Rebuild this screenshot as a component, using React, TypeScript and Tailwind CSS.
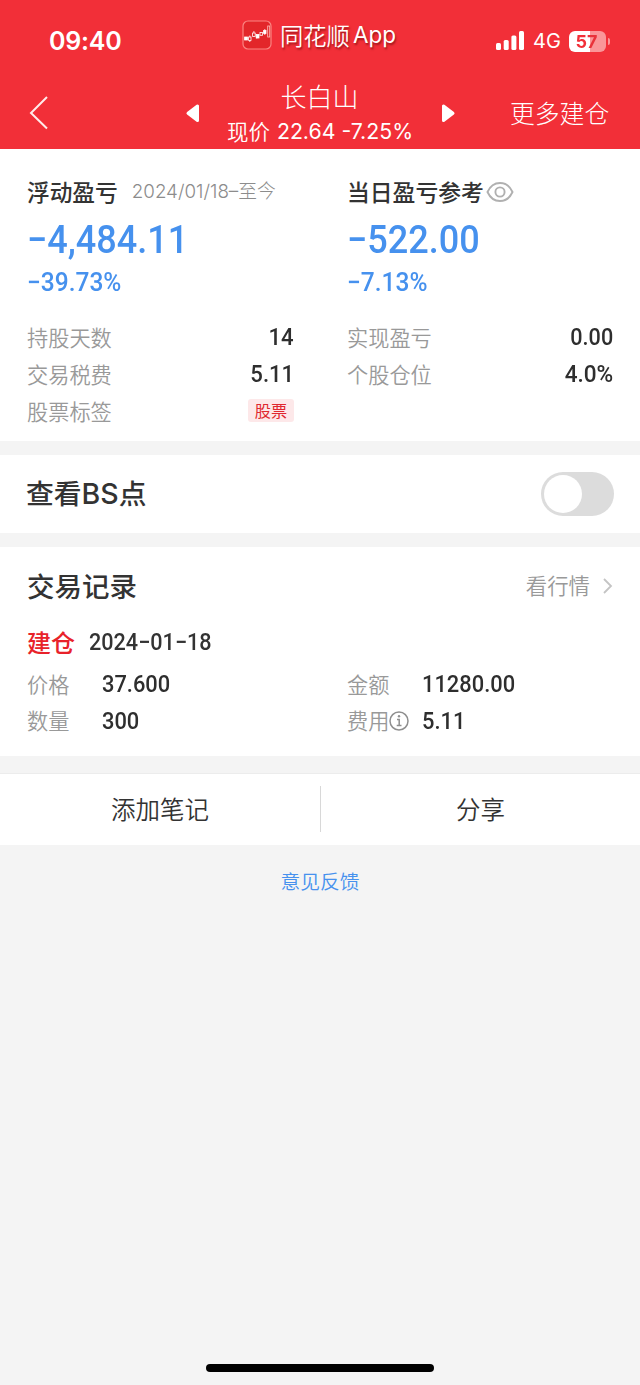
import React from "react";

const cjk = "font-['Noto_Sans_CJK_SC',sans-serif]";
const num = "font-[Roboto,'Noto_Sans_CJK_SC',sans-serif]";

function Num({ children, className = "" }: { children: React.ReactNode; className?: string }) {
  return <span className={`inline-block whitespace-nowrap font-medium ${num} ${className}`}>{children}</span>;
}

function StatusBar() {
  return (
    <div className="flex h-[74px] items-start text-white">
      <div className="w-[242px] pl-[49px] pt-[25px] font-['Inter',sans-serif] text-[25px] font-semibold leading-8 tracking-[-0.2px]">09:40</div>
      <div className="flex w-[254px] items-center gap-2 pt-[19px]">
        <svg width="30" height="30" viewBox="0 0 30 30" className="shrink-0">
          <rect x="1" y="1" width="28" height="28" rx="5" fill="#e3262a" stroke="#fa8582" strokeWidth="1.2" />
          <g fill="#fff" stroke="#fff" strokeWidth="0.8">
            <rect x="2.600" y="17" width="2.800" height="3" />
            <rect x="6.600" y="17" width="2.400" height="3.500" fill="none" />
            <path d="M7.800 15.500v1.500M7.800 20.500v1.500" />
            <rect x="10.600" y="13" width="2.600" height="3.500" fill="none" />
            <path d="M11.900 11v2M14.800 15.500v3" />
            <rect x="14.200" y="14.500" width="2.800" height="3.500" />
            <rect x="18" y="12.500" width="2.400" height="2.800" fill="none" />
            <rect x="21.600" y="10.500" width="2.400" height="3" />
            <path d="M22.800 9v6" />
            <rect x="25.700" y="6" width="2" height="11" fill="none" stroke="#ffc0bc" />
          </g>
        </svg>
        <div className="flex items-center gap-[3px] whitespace-nowrap leading-[30px] [text-shadow:1px_2px_2px_rgba(90,0,0,0.55)]">
          <span className={`${cjk} text-[23.3px] font-[350]`}>同花顺</span>
          <span className="pt-px font-['Inter',sans-serif] text-[22.500px]">App</span>
        </div>
      </div>
      <div className="flex items-center pt-[26px]">
        <svg width="28" height="30" viewBox="0 0 28 30" fill="#fff">
          <rect x="0" y="17" width="5" height="7" rx="1.5" />
          <rect x="7.7" y="14" width="5" height="10" rx="1.5" />
          <rect x="15.4" y="9.5" width="5" height="14.5" rx="1.5" />
          <rect x="23" y="5" width="5" height="19" rx="1.5" />
        </svg>
        <span className="w-[45px] pl-[9px] font-['Inter',sans-serif] text-[20px] leading-[30px]">4G</span>
        <div className="flex items-center">
          <div className="flex h-[21px] w-[37px] items-center justify-center rounded-[6px] bg-[linear-gradient(90deg,#fff_57%,#fa9699_57%)]">
            <span className="bg-[linear-gradient(90deg,#f22f38_50%,#e9323a_50%)] bg-clip-text pr-[2px] font-['Inter',sans-serif] text-[18px] font-bold leading-[21px] text-transparent">57</span>
          </div>
          <div className="ml-[1.5px] h-[7px] w-[2.5px] rounded-r-full bg-[#fa9699]" />
        </div>
      </div>
    </div>
  );
}

function NavBar() {
  return (
    <div className={`flex h-[75px] text-white ${cjk}`}>
      <div className="w-[186px] pl-[28px] pt-[21px]">
        <svg width="22" height="36" viewBox="0 0 22 36" fill="none" stroke="#ffeceb" strokeWidth="2">
          <path d="M19 2L3 18L19 33.500" />
        </svg>
      </div>
      <div className="flex w-[269px] justify-between">
        <svg width="14" height="20" viewBox="0 0 14 20" className="mt-[29px]" fill="#fff" stroke="#fff" strokeWidth="3" strokeLinejoin="round">
          <path d="M2 10.300L11.500 3V17.600Z" />
        </svg>
        <div className="flex flex-col items-center whitespace-nowrap pr-px">
          <div className="h-[39px] pt-[2px] pr-px text-[26px] font-light leading-[40px]">长白山</div>
          <div className="flex h-[36px] items-center gap-[7px]">
            <span className="text-[21.500px] font-[350] leading-[34px]">现价</span>
            <span className="font-['Inter',sans-serif] text-[21.300px] leading-[34px]">22.64 -7.25%</span>
          </div>
        </div>
        <svg width="14" height="20" viewBox="0 0 14 20" className="mt-[29px]" fill="#fff" stroke="#fff" strokeWidth="3" strokeLinejoin="round">
          <path d="M12 10.300L2.500 3V17.600Z" />
        </svg>
      </div>
      <div className="ml-[55px] pt-[18px] text-[24.800px] font-light leading-[40px]">更多建仓</div>
    </div>
  );
}

const label = "text-[21.200px] font-[350] text-[#999]";

function Stat({ label: text, children }: { label: string; children?: React.ReactNode }) {
  return (
    <div className="flex h-[36.800px] items-center justify-between leading-[36px]">
      <span className={label}>{text}</span>
      {children}
    </div>
  );
}

const big = "text-[39.400px] leading-[58px] text-[#4691ee] origin-left scale-x-[0.915]";
const pct = "text-[25.800px] leading-[27px] text-[#4691ee] origin-left scale-x-[0.95]";
const val = "text-[24.300px] text-[#2e2e2e]";

export default function App() {
  return (
    <div className={`flex h-[1385px] w-[640px] flex-col overflow-hidden bg-[#f4f4f4] text-[#333] ${cjk}`}>
      <header className="h-[149px] shrink-0 bg-[#f22f38]">
        <StatusBar />
        <NavBar />
      </header>

      <section className="grid h-[292px] shrink-0 grid-cols-[267px_266px] gap-x-[53px] bg-white pl-[27px] pt-[24px]">
        <div>
          <div className="flex h-[38px] items-center whitespace-nowrap">
            <span className="text-[22.700px] font-medium leading-[38px]">浮动盈亏</span>
            <span className="ml-[14px] font-['Inter','Noto_Sans_CJK_SC',sans-serif] text-[18.800px] font-light leading-[38px] text-[#8c8c8c]">2024/01/18–至今</span>
          </div>
          <div className="h-[58px]"><Num className={big}>−4,484.11</Num></div>
          <div className="h-[28px]"><Num className={pct}>−39.73%</Num></div>
          <div className="mt-[22px]">
            <Stat label="持股天数"><Num className={`${val} origin-right scale-x-[0.91]`}>14</Num></Stat>
            <Stat label="交易税费"><Num className={`${val} origin-right scale-x-[0.91]`}>5.11</Num></Stat>
            <Stat label="股票标签">
              <span className="h-[23px] w-[46px] rounded-[3px] bg-[#fde8e9] text-center text-[16.200px] leading-[23px] text-[#e0282f]">股票</span>
            </Stat>
          </div>
        </div>
        <div>
          <div className="flex h-[38px] items-center whitespace-nowrap">
            <span className="text-[22.800px] font-medium leading-[38px]">当日盈亏参考</span>
            <svg width="28" height="22" viewBox="0 0 28 22" className="ml-[2.500px]" fill="none" stroke="#b0b0b0" strokeWidth="1.900">
              <path d="M1.500 11C4 5.500 8.500 2 14 2S24 5.500 26.500 11C24 16.500 19.500 20 14 20S4 16.500 1.500 11Z" />
              <circle cx="14" cy="11" r="4.600" />
            </svg>
          </div>
          <div className="h-[58px]"><Num className={big}>−522.00</Num></div>
          <div className="h-[28px]"><Num className={pct}>−7.13%</Num></div>
          <div className="mt-[22px]">
            <Stat label="实现盈亏"><Num className={`${val} origin-right scale-x-[0.89]`}>0.00</Num></Stat>
            <Stat label="个股仓位"><Num className={`${val} origin-right scale-x-[0.93]`}>4.0%</Num></Stat>
          </div>
        </div>
      </section>

      <section className="mt-[14px] flex h-[78px] shrink-0 items-center justify-between bg-white pl-[26px] pr-[26px]">
        <span className="text-[27.800px] font-medium">查看<span className="font-['Inter',sans-serif] text-[28.500px]">BS</span>点</span>
        <button aria-pressed="false" className="flex h-[44px] w-[73px] items-center rounded-full bg-[#dcdcdc] pl-[3px]">
          <span className="h-[38px] w-[38px] rounded-full bg-white" />
        </button>
      </section>

      <section className="mt-[14px] h-[209px] shrink-0 bg-white pl-[27px] pr-[27px] pt-[18px]">
        <div className="flex h-[40px] items-center justify-between">
          <span className="text-[27.500px] font-medium leading-[40px]">交易记录</span>
          <div className="flex items-center gap-[12px] text-[21.400px] font-[350] leading-[40px] text-[#999]">
            看行情
            <svg width="11" height="18" viewBox="0 0 11 18" className="mt-[2px]" fill="none" stroke="#c4c4c4" strokeWidth="1.800"><path d="M2 2L9 9L2 16" /></svg>
          </div>
        </div>
        <div className="mt-[17px] flex h-[40px] items-center">
          <span className="w-[62px] text-[24px] font-medium text-[#e8222a]">建仓</span>
          <Num className="origin-left scale-x-[0.92] text-[23.500px] leading-[40px]">2024−01−18</Num>
        </div>
        <div className="mt-[4px] grid grid-cols-[320px_auto]">
          {[
            ["价格", "37.600", "金额", "11280.00"],
            ["数量", "300", "费用", "5.11"],
          ].map(([a, b, c, d]) => (
            <React.Fragment key={a}>
              <div className="flex h-[36.800px] items-center">
                <span className="w-[75px] pb-[2px]"><span className={label}>{a}</span></span>
                <Num className={`${val} origin-left scale-x-[0.9]`}>{b}</Num>
              </div>
              <div className="flex h-[36.800px] items-center">
                <span className="flex w-[75px] items-center">
                  <span className={`pb-[2px] ${label}`}>{c}</span>
                  {c === "费用" && (
                    <svg width="20" height="20" viewBox="0 0 20 20" className="shrink-0" fill="none" stroke="#8f8f8f" strokeWidth="1.500">
                      <circle cx="10" cy="10" r="9" />
                      <path d="M8 8.500H10.200V14.500M7.700 14.500H12.500" />
                      <circle cx="10" cy="5.300" r="1.200" fill="#8f8f8f" stroke="none" />
                    </svg>
                  )}
                </span>
                <Num className={`${val} origin-left scale-x-[0.9]`}>{d}</Num>
              </div>
            </React.Fragment>
          ))}
        </div>
      </section>

      <section className="mt-[17px] flex h-[72px] shrink-0 items-center border-t border-[#ececec] bg-white text-center text-[24.500px]">
        <div className="w-[320px] font-[350]">添加笔记</div>
        <div className="mb-[2px] h-[46px] w-px bg-[#d8d8d8]" />
        <div className="w-[319px] font-[350]">分享</div>
      </section>

      <div className="mt-[16px] text-center text-[19.800px] font-[350] leading-[40px] text-[#4691ee]">意见反馈</div>
      <div className="mx-auto mb-[13px] mt-auto h-[8px] w-[228px] rounded-full bg-black" />
    </div>
  );
}
